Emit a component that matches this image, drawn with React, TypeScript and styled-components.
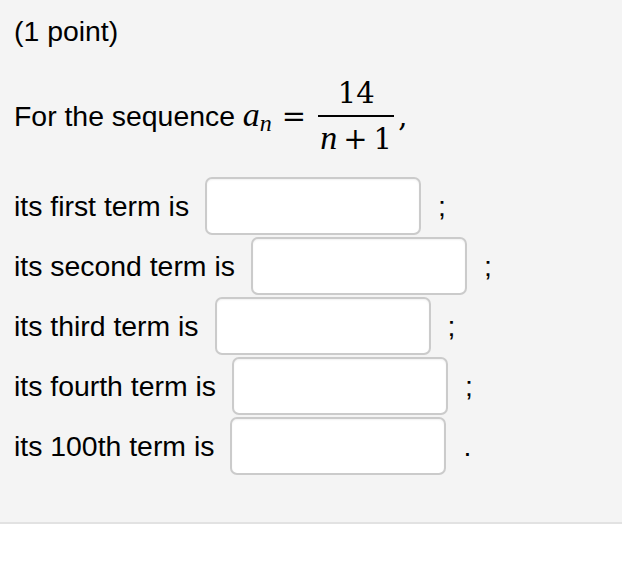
import React from "react";
import styled, { createGlobalStyle } from "styled-components";

const GlobalStyle = createGlobalStyle`
  html, body {
    margin: 0;
    padding: 0;
    background: #ffffff;
  }
  body {
    font-family: "Liberation Sans", Arial, Helvetica, sans-serif;
    color: #000;
  }
`;

const terms = [
  { label: "its first term is", end: ";" },
  { label: "its second term is", end: ";" },
  { label: "its third term is", end: ";" },
  { label: "its fourth term is", end: ";" },
  { label: "its 100th term is", end: "." },
];

const App: React.FC = () => {
  return (
    <>
      <GlobalStyle />
      <Panel>
        <Heading>(1 point)</Heading>
        <SequenceLine>
          <Lead>
            For the sequence{" "}
            <MathVar>
              a<Sub>n</Sub>
            </MathVar>
            <MathOp>=</MathOp>
          </Lead>
          <Fraction>
            <Numerator>14</Numerator>
            <Bar />
            <Denominator>
              <MathVar>n</MathVar>
              <MathBin>+</MathBin>1
            </Denominator>
          </Fraction>
          <Comma>,</Comma>
        </SequenceLine>
        <AnswerList>
          {terms.map((t) => (
            <AnswerRow key={t.label}>
              <Label>{t.label}</Label>
              <AnswerInput type="text" />
              <Trail>{t.end}</Trail>
            </AnswerRow>
          ))}
        </AnswerList>
      </Panel>
    </>
  );
};

const Panel = styled.div`
  background: #f4f4f4;
  border-bottom: 2px solid #e2e2e2;
  padding: 15px 0 46px 14px;
  font-size: 28.4px;
`;

const Heading = styled.div`
  line-height: 32px;
  height: 32px;
`;

const SequenceLine = styled.div`
  display: flex;
  align-items: center;
  margin-top: 30px;
  height: 78px;
`;

const Lead = styled.span`
  line-height: 30px;
  white-space: nowrap;
`;

const MathVar = styled.span`
  font-family: "Liberation Serif", "Times New Roman", serif;
  font-style: italic;
  font-size: 34px;
`;

const Sub = styled.span`
  font-size: 24px;
  position: relative;
  top: 5px;
`;

const MathOp = styled.span`
  font-family: "DejaVu Serif", "Liberation Serif", serif;
  font-size: 29px;
  margin: 0 12px 0 10px;
`;

const MathBin = styled.span`
  font-style: normal;
  margin: 0 6px;
`;

const Fraction = styled.span`
  display: inline-flex;
  flex-direction: column;
  align-items: center;
  font-family: "DejaVu Serif", "Liberation Serif", serif;
  font-size: 29px;
  line-height: 32px;
`;

const Numerator = styled.span`
  padding-bottom: 6px;
`;

const Bar = styled.span`
  display: block;
  width: 76px;
  height: 2px;
  background: #000;
`;

const Denominator = styled.span`
  padding-top: 5px;
`;

const Comma = styled.span`
  font-family: "DejaVu Serif", "Liberation Serif", serif;
  font-size: 29px;
  line-height: 32px;
  margin: 0 0 0 4px;
`;

const AnswerList = styled.div`
  display: flex;
  flex-direction: column;
  margin-top: 21px;
`;

const AnswerRow = styled.div`
  display: flex;
  align-items: center;
  height: 60px;
`;

const Label = styled.span`
  line-height: 32px;
  white-space: nowrap;
`;

const AnswerInput = styled.input`
  box-sizing: border-box;
  width: 216px;
  height: 58px;
  margin-left: 16px;
  border: 2px solid #cbcbcb;
  border-radius: 7px;
  background: #fff;
  box-shadow: inset 0 1px 2px rgba(0, 0, 0, 0.06);
  outline: none;
  padding: 0 8px;
  font-size: 20px;
`;

const Trail = styled.span`
  margin-left: 17px;
  line-height: 32px;
`;

export default App;
